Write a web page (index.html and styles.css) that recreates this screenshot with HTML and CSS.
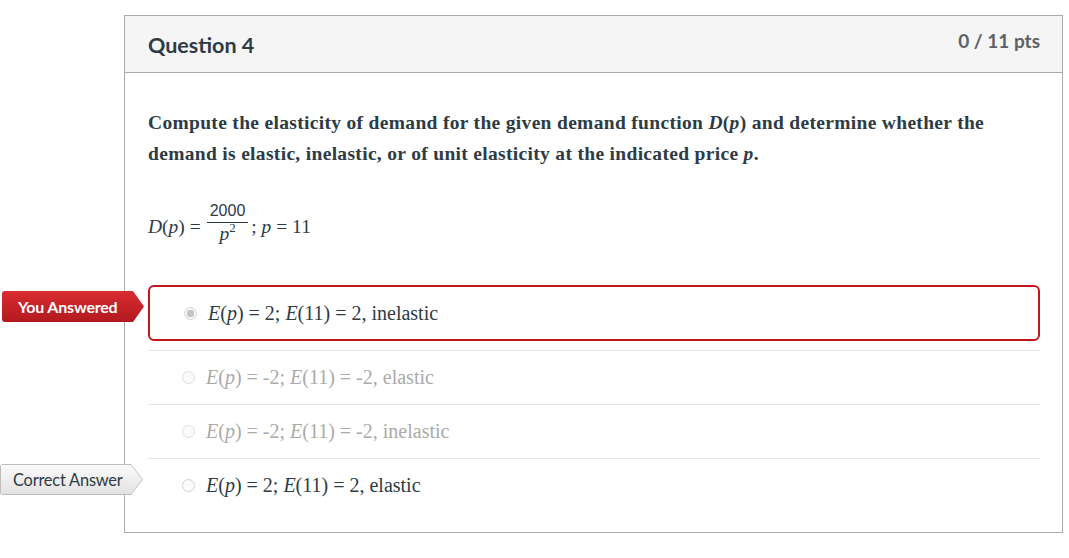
FILE: index.html
```html
<!DOCTYPE html>
<html>
<head>
<meta charset="utf-8">
<link rel="stylesheet" href="styles.css">
</head>
<body>
<div class="card">
  <div class="card-header">
    <h2 class="q-title">Question 4</h2>
    <div class="q-points">0 / 11 pts</div>
  </div>
  <div class="card-body">
    <p class="q-text">Compute the elasticity of demand for the given demand function <i>D</i>(<i>p</i>) and determine whether the demand is elastic, inelastic, or of unit elasticity at the indicated price <i>p</i>.</p>
    <div class="formula">
      <span class="serif"><i>D</i>(<i>p</i>) =</span>
      <span class="frac">
        <span class="num">2000</span>
        <span class="den"><i>p</i><sup>2</sup></span>
      </span>
      <span class="serif">; <i>p</i> = 11</span>
    </div>
    <div class="answers">
      <div class="answer selected">
        <span class="tag tag-wrong">You Answered</span>
        <span class="radio radio-checked"></span>
        <span class="ans-text"><i>E</i>(<i>p</i>) = 2; <i>E</i>(11) = 2, inelastic</span>
      </div>
      <div class="answer muted">
        <span class="radio"></span>
        <span class="ans-text"><i>E</i>(<i>p</i>) = -2; <i>E</i>(11) = -2, elastic</span>
      </div>
      <div class="answer muted">
        <span class="radio"></span>
        <span class="ans-text"><i>E</i>(<i>p</i>) = -2; <i>E</i>(11) = -2, inelastic</span>
      </div>
      <div class="answer">
        <span class="tag tag-correct">Correct Answer</span>
        <span class="radio"></span>
        <span class="ans-text"><i>E</i>(<i>p</i>) = 2; <i>E</i>(11) = 2, elastic</span>
      </div>
    </div>
  </div>
</div>
</body>
</html>
```

FILE: styles.css
```css
html, body {
  margin: 0;
  padding: 0;
  background: #ffffff;
}
body {
  font-family: Lato, "Liberation Sans", sans-serif;
  color: #2d3b45;
}
.card {
  margin: 15px 0 0 124px;
  width: 937px;
  border: 1px solid #aaaaaa;
  background: #fff;
  height: 516px;
}
.card-header {
  height: 56px;
  background: #f5f5f5;
  border-bottom: 1px solid #aaaaaa;
  display: flex;
  justify-content: space-between;
  padding: 0 22px 0 23px;
}
.q-title {
  margin: 0;
  font-size: 21.5px;
  font-weight: 700;
  line-height: 22px;
  padding-top: 18px;
  color: #2d3b45;
}
.q-points {
  font-size: 19px;
  font-weight: 700;
  color: #5b6166;
  padding-top: 14px;
  line-height: 22px;
}
.card-body {
  padding: 34px 22px 0 23px;
}
.q-text {
  margin: 0;
  font-family: "Liberation Serif", "Times New Roman", serif;
  font-weight: 700;
  font-size: 19.5px;
  letter-spacing: 0.32px;
  line-height: 31px;
  color: #2d3b45;
}
.formula {
  display: flex;
  align-items: center;
  margin-top: 30px;
  height: 56px;
  font-family: "Liberation Serif", "Times New Roman", serif;
  font-size: 19.5px;
  color: #2d3b45;
}
.serif {
  white-space: pre;
}
.frac {
  display: inline-flex;
  flex-direction: column;
  align-items: center;
  margin: 0 3px 0 6px;
}
.num {
  font-family: "Liberation Sans", Arial, sans-serif;
  font-size: 16px;
  line-height: 19px;
  padding: 0 3px 2px;
  border-bottom: 1px solid #2d3b45;
}
.den {
  font-size: 19.5px;
  line-height: 22px;
  padding-bottom: 8px;
}
.den sup {
  font-size: 13px;
  vertical-align: 8px;
  line-height: 0;
}
.answers {
  margin-top: 30px;
}
.answer {
  position: relative;
  display: flex;
  align-items: center;
  height: 53px;
  border-top: 1px solid #e6e6e6;
  padding-left: 34px;
  font-family: "Liberation Serif", "Times New Roman", serif;
  font-size: 20px;
  color: #2d3b45;
}
.answer.selected {
  height: 52px;
  border: 2px solid #c5161d;
  border-radius: 6px;
  margin-bottom: 9px;
}
.answer.muted {
  color: #aaaaaa;
}
.radio {
  border: 1px solid #d2d2d2;
  border-radius: 50%;
  background: #fafafa;
  margin-right: 11px;
  box-sizing: border-box;
  flex: none;
  width: 13px;
  height: 13px;
}
.radio-checked {
  background: radial-gradient(circle, #c4c4c4 0, #c4c4c4 3.5px, #f4f4f4 4px);
  border-color: #d6d6d6;
}
.muted .radio {
  border-color: #e0e0e0;
}
.tag {
  position: absolute;
  top: 4px;
  left: -148px;
  height: 31px;
  width: 142px;
  display: flex;
  align-items: center;
  padding-left: 16px;
  box-sizing: border-box;
  font-family: Lato, "Liberation Sans", sans-serif;
  font-size: 16px;
  font-weight: 700;
  letter-spacing: -0.2px;
  clip-path: polygon(0 0, 131px 0, 100% 50%, 131px 100%, 0 100%);
  border-radius: 3px 0 0 3px;
}
.tag-wrong {
  color: #ffffff;
  background: linear-gradient(#d92d31, #b2191e);
}
.tag-correct {
  top: 5px;
  left: -148px;
  width: 143px;
  padding-left: 13px;
  color: #2d3b45;
  font-weight: 400;
  font-size: 16.4px;
  background: #bdbdbd;
  z-index: 0;
}
.tag-correct::before {
  content: "";
  position: absolute;
  inset: 1px;
  background: linear-gradient(#fbfbfb, #e2e2e2);
  clip-path: polygon(0 0, 130px 0, 100% 50%, 130px 100%, 0 100%);
  z-index: -1;
}
```
